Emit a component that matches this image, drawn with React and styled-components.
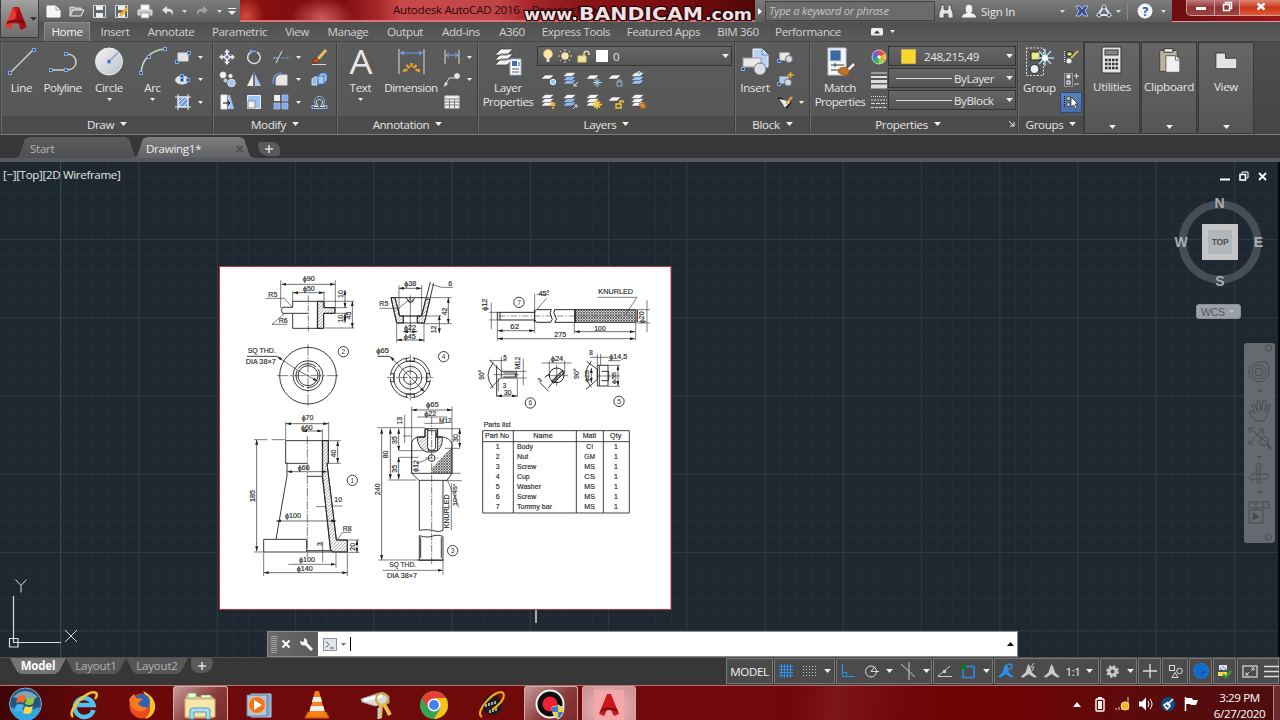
import React from "react";
import styled, { createGlobalStyle, css } from "styled-components";

const GlobalStyle = createGlobalStyle`
  * {
    box-sizing: border-box;
  }

  body {
    margin: 0;
    background: #000;
    overflow: hidden;
  }
`;

const Window = styled.div`
  width: 1280px;
  height: 720px;
  display: flex;
  flex-direction: column;
  overflow: hidden;
  font-family: "Open Sans", "Noto Sans", sans-serif;
  font-size: 11.6px;
  letter-spacing: -0.55px;
  color: #e6e6e6;
  background: #373737;
  white-space: nowrap;
`;

/* ---------- header ---------- */

const Header = styled.div`
  display: grid;
  grid-template-columns: 39px 1fr;
  grid-template-rows: 22px 19px;
  flex: none;
  background: #595959;
`;

const AppButton = styled.div`
  grid-row: 1 / 3;
  height: 38px;
  display: flex;
  align-items: center;
  padding-left: 3px;
  gap: 3px;
  border: 1px solid #3c3c3c;
  border-top: 0;
  background: linear-gradient(#a2a2a2, #858585 50%, #6f6f6f);
`;

const TitleBar = styled.div`
  display: flex;
  background: #7c0d10;
`;

const QuickAccess = styled.div`
  width: 201px;
  display: flex;
  align-items: center;
  padding-left: 4px;
  background: linear-gradient(#7b7b7b, #6a6a6a 60%, #5c5c5c);
`;

const Slot = styled.div`
  width: ${(p) => p.w || 22.7}px;
  height: ${(p) => (p.h ? p.h + "px" : "auto")};
  display: flex;
  align-items: center;
  justify-content: center;
  gap: ${(p) => p.gap || 0}px;
  flex: none;
`;

const Caption = styled.div`
  position: relative;
  width: 515px;
  padding-left: 153px;
  display: flex;
  gap: 12px;
  line-height: 20px;
  color: #2b0809;
  letter-spacing: -0.25px;
  border-bottom: 2px solid #d97373;
  background:
    radial-gradient(ellipse 18px 20px at 6px 16px, #d2493b, transparent),
    radial-gradient(ellipse 32px 20px at 82px 18px, #d05a5c, transparent),
    linear-gradient(90deg, #8a0f10, #7d0d0f 20%, #a8282b 27%, #c9494b 31%, #c04547 50%, #a8282b 56%, #8c1518 66%, #7a0c0f 85%, #4d0708);
`;

const Watermark = styled.svg`
  position: absolute;
  left: 281px;
  top: 0;
  overflow: visible;
  z-index: 3;
`;

const InfoCenter = styled.div`
  width: 417px;
  display: flex;
  align-items: center;
  background: linear-gradient(#7b7b7b, #6a6a6a 60%, #5c5c5c);
`;

const SearchBox = styled.div`
  width: 170px;
  height: 20px;
  padding-left: 3px;
  line-height: 17px;
  font-style: italic;
  font-size: 11.2px;
  letter-spacing: -0.3px;
  color: #c3c3c3;
  border: 1px solid #434343;
  background: #6b6b6b;
`;

const SignIn = styled.div`
  width: 75px;
  padding-left: 1px;
  letter-spacing: -0.3px;
`;

const Rule = styled.div`
  width: 1px;
  height: 17px;
  margin: 0 3px 0 5px;
  background: #8b8b8b;
`;

const WindowControls = styled.div`
  flex: 1;
  display: flex;
  padding-left: 14px;
  border-bottom: 1px solid #e09a9a;
  background: linear-gradient(90deg, #6b0d0f, #991a1c);
`;

const ControlButton = styled.div`
  width: ${(p) => p.w}px;
  height: 16px;
  display: flex;
  align-items: center;
  justify-content: center;
  padding-bottom: 2px;
  border: 1px solid #d39c9c;
  border-top: 0;
  border-left-width: ${(p) => (p.first ? 1 : 0)}px;
  border-radius: ${(p) => (p.first ? "0 0 0 5px" : 0)};
  background: ${(p) =>
    p.close
      ? "linear-gradient(#dd8570, #c9371c 50%, #e35a33)"
      : "linear-gradient(#c27c7d, #8e3436 50%, #9c4344)"};
`;

const TabRow = styled.div`
  display: flex;
  padding-left: 5px;
  background: linear-gradient(#505050, #5b5b5b);
`;

const RibbonTab = styled.div`
  width: ${(p) => p.w}px;
  height: 19px;
  line-height: 20px;
  text-align: center;
  letter-spacing: -0.4px;
  color: ${(p) => (p.active ? "#f2f2f2" : "#d2d2d2")};
  ${(p) =>
    p.active &&
    css`
      line-height: 18px;
      background: linear-gradient(#7a7a7a, #686868);
      border: 1px solid #8a8a8a;
      border-bottom: 0;
    `}
`;

/* ---------- ribbon ---------- */

const Ribbon = styled.div`
  display: flex;
  flex: none;
  height: 94px;
  padding-left: 1px;
  background: linear-gradient(#4e4e4e, #454545);
  border-top: 1px solid #474747;
  border-bottom: 1px solid #7d7d7d;
`;

const Panel = styled.div`
  width: ${(p) => p.w}px;
  display: flex;
  flex-direction: column;
  border-right: 1px solid #3f3f3f;
  border-left: 1px solid #6a6a6a;
  background: linear-gradient(#5c5c5c, #565656);
`;

const PanelBody = styled.div`
  height: 74px;
  display: flex;
  padding-top: 4px;
`;

const PanelTitle = styled.div`
  flex: 1;
  display: flex;
  align-items: center;
  justify-content: center;
  gap: 6px;
  padding-left: ${(p) => p.shift || 0}px;
  padding-bottom: 2px;
  letter-spacing: -0.35px;
  background: #4c4c4c;
`;

const Launcher = styled.div`
  margin-left: 62px;
  display: flex;
`;

const BigButton = styled.div`
  width: ${(p) => p.w}px;
  display: flex;
  flex-direction: column;
  align-items: center;
`;

const BigLabel = styled.div`
  height: 14px;
  line-height: 14px;
  margin-top: ${(p) => (p.first ? 5 : 0)}px;
  letter-spacing: ${(p) => (p.wide ? -0.55 : -0.3)}px;
`;

const ArrowGap = styled.div`
  height: 8px;
  display: flex;
  align-items: center;
`;

const IconGrid = styled.div`
  display: grid;
  grid-template-columns: ${(p) => p.cols};
  grid-auto-rows: 22.5px;
  align-content: start;
  align-items: center;
  justify-items: center;
`;

const Column = styled.div`
  display: flex;
  flex-direction: column;
  gap: ${(p) => p.gap || 0}px;
`;

const Combo = styled.div`
  width: ${(p) => p.w}px;
  height: 20px;
  display: flex;
  align-items: center;
  gap: ${(p) => p.gap || 0}px;
  padding: 0 2px 0 ${(p) => p.pad || 0}px;
  letter-spacing: -0.4px;
  border: 1px solid #343434;
  background: linear-gradient(#666, #555);

  > :last-child {
    margin-left: auto;
  }
`;

const Swatch = styled.div`
  width: ${(p) => p.size}px;
  height: ${(p) => p.size}px;
  border: 1px solid ${(p) => p.edge || p.color};
  background: ${(p) => p.color};
`;

const LineSample = styled.div`
  width: 56px;
  height: 1px;
  background: #ddd;
`;

const Toggled = styled.div`
  width: 22px;
  height: 21px;
  display: flex;
  align-items: center;
  justify-content: center;
  border: 1px solid #2d4a75;
  background: linear-gradient(#5a82bd, #486fa9);
`;

const CollapsedPanel = styled.div`
  width: 56px;
  margin-right: 1px;
  display: flex;
  flex-direction: column;
  align-items: center;
  padding-top: 2px;
  border: 1px solid #393939;
  background: linear-gradient(#666, #565656);

  > :last-child {
    margin-top: auto;
    margin-bottom: 4px;
  }
`;

/* ---------- document tabs ---------- */

const DocTabs = styled.div`
  height: 27px;
  flex: none;
  display: flex;
  align-items: flex-end;
  padding-left: 15px;
  border-bottom: 4px solid #565a60;
  background: #373737;
`;

const DocTab = styled.div`
  width: ${(p) => p.w}px;
  height: 21px;
  display: flex;
  align-items: center;
  padding-top: 2px;
  padding-left: ${(p) => p.pad}px;
  letter-spacing: -0.3px;
  color: ${(p) => (p.active ? "#eee" : "#b4b4b4")};
  background: ${(p) => (p.active ? "linear-gradient(#7d7d7d, #606266)" : "linear-gradient(#5c5c5c, #4e4f51)")};
  clip-path: polygon(0 100%, 4px 92%, 10px 10%, 14px 0, calc(100% - 14px) 0, calc(100% - 10px) 10%, calc(100% - 4px) 92%, 100% 100%);
  margin-right: ${(p) => p.overlap || 0}px;
`;

const CloseMark = styled.span`
  margin-left: 34px;
  font-size: 11px;
  font-weight: 700;
  color: #4c4c4c;
`;

const AddTab = styled.div`
  width: 22px;
  height: ${(p) => p.h || 14}px;
  margin: ${(p) => p.m || "0"};
  display: flex;
  align-items: center;
  justify-content: center;
  border-radius: ${(p) => p.r || "3px 8px 3px 10px"};
  background: #5a5a5a;
`;

/* ---------- model space ---------- */

const ModelSpace = styled.div`
  position: relative;
  height: 495px;
  flex: none;
  background: #1f2730;
`;

const Scene = styled.svg`
  display: block;
`;

const ViewportLabel = styled.div`
  position: absolute;
  left: 3px;
  top: 4px;
  line-height: 18px;
  letter-spacing: -0.35px;
  color: #e3e5e7;
`;

const ViewportControls = styled.div`
  position: absolute;
  right: 13px;
  top: 9px;
  display: flex;
  align-items: center;
  gap: 9px;
`;

const ViewCube = styled.svg`
  position: absolute;
  left: 1170px;
  top: 33px;
`;

const WcsMenu = styled.div`
  position: absolute;
  left: 1196px;
  top: 142px;
  width: 45px;
  height: 15px;
  display: flex;
  justify-content: space-between;
  align-items: center;
  padding: 0 6px 0 4px;
  font: 10.5px/14px "Liberation Sans", sans-serif;
  letter-spacing: -0.2px;
  color: #555a60;
  border-radius: 3px;
  border: 1px solid #8a9096;
  background: #9ba0a6;
`;

const NavBar = styled.div`
  position: absolute;
  left: 1244px;
  top: 181px;
  width: 31px;
  height: 200px;
  border-radius: 3px;
  background: #666a6e;
`;

const CommandLine = styled.div`
  position: absolute;
  left: 267px;
  top: 469px;
  width: 751px;
  height: 26px;
  display: flex;
  border: 1px solid #8b8b8b;
  background: #fff;
`;

const CommandTools = styled.div`
  width: 50px;
  display: flex;
  align-items: center;
  gap: 8px;
  padding-left: 3px;
  background: linear-gradient(90deg, #6a6a6a, #5a5a5a);

  > :first-child {
    margin-right: -4px;
  }
`;

const CommandInput = styled.div`
  flex: 1;
  display: flex;
  align-items: center;
  gap: 4px;
  padding: 0 3px 0 5px;

  > :last-child {
    margin-left: auto;
  }
`;

const Caret = styled.div`
  width: 1px;
  height: 14px;
  background: #000;
`;

/* ---------- status bar ---------- */

const StatusBar = styled.div`
  height: 28px;
  flex: none;
  display: flex;
  justify-content: space-between;
  border-top: 1px solid #515151;
  background: #373737;
`;

const LayoutTabs = styled.div`
  display: flex;
  padding-left: 10px;
`;

const LayoutTab = styled.div`
  width: ${(p) => p.w}px;
  height: 16px;
  line-height: 15px;
  text-align: center;
  letter-spacing: -0.2px;
  color: ${(p) => (p.active ? "#fff" : "#b2b2b2")};
  font-weight: ${(p) => (p.active ? 700 : 400)};
  font-size: 11.5px;
  background: ${(p) => (p.active ? "#757575" : "#565656")};
  clip-path: polygon(0 0, 100% 0, calc(100% - 7px) 85%, calc(100% - 11px) 100%, 11px 100%, 7px 85%);
`;

const StatusTools = styled.div`
  display: flex;
  height: 26px;
`;

const StatusCell = styled.div`
  width: ${(p) => p.w}px;
  display: flex;
  align-items: center;
  justify-content: ${(p) => (p.start ? "flex-start" : "center")};
  border: 1px solid #797979;
  margin-right: 1px;
  background: #4b4b4b;
  color: #f4f4f4;
  letter-spacing: -0.4px;
`;

/* ---------- taskbar ---------- */

const Taskbar = styled.div`
  flex: 1;
  display: flex;
  border-top: 1px solid #b57070;
  background:
    linear-gradient(100deg, transparent 62%, #7d1617 65%, transparent 71%),
    linear-gradient(90deg, #3d0506, #6b090a 8%, #720a0b 50%, #6d0404 80%, #5a0b0c 90%, #4c0d0e);
`;

const TaskButton = styled.div`
  width: 54.4px;
  margin: 0 2px;
  display: flex;
  align-items: center;
  justify-content: center;
  border: 1px solid transparent;
  border-bottom: 0;
  border-radius: 3px 3px 0 0;
  ${(p) =>
    p.open &&
    css`
      border-color: #d8a9a9;
      background: ${p.bright
        ? "radial-gradient(circle at 50% 60%, #ffd0d0, #dba0a0 60%, #c98d8d)"
        : "linear-gradient(135deg, #c99a9a, #8a3a3b 55%, #7b2829)"};
    `}
`;

const Tray = styled.div`
  margin-left: auto;
  display: flex;
  align-items: center;
`;

const Clock = styled.div`
  width: 67px;
  margin-left: 4px;
  padding-top: 4px;
  text-align: center;
  color: #fff;
  line-height: 16px;
  letter-spacing: -0.4px;
`;

const ShowDesktop = styled.div`
  width: 7px;
  height: 100%;
  border-left: 1px solid #b98080;
  background: #6e2a2b;
`;

/* ---------- icons ---------- */

const Svg = ({ w = 18, h = w, vb, children }) => (
  <svg width={w} height={h} viewBox={vb || `0 0 ${w} ${h}`} fill="none" stroke="#dcdcdc">
    {children}
  </svg>
);

const Down = ({ s = 6, c = "#f0f0f0" }) => (
  <svg width={s} height={s / 2 + 0.5} viewBox="0 0 6 3.5">
    <path d="M0 0h6l-3 3.5z" fill={c} />
  </svg>
);

const Grip = ({ x, y }) => (
  <rect x={x - 1.5} y={y - 1.5} width="3" height="3" fill="#3c4a66" stroke="#78a9f2" />
);

const sheet = (y, fill = "#f3f3f3") => <path d={`M5 ${y}h9l-4 4h-9z`} fill={fill} stroke="#444" strokeWidth=".5" />;

const AutodeskA = ({ w }) => (
  <svg width={w} height={w + 2} viewBox="0 0 24 26">
    <path d="M9.500 1h6l8 21-6 3-2-6q-4-2-7 0l-2 5-5-2z" fill="#c9191f" />
    <path d="M9.500 1L1 22l5 2 7-15z" fill="#e53a38" />
    <path d="M15.500 1l-3 9 3 8 2 7 6-3z" fill="#a50e14" />
    <path d="M3.500 16q9-4 18 0l1 3q-10-4-20 0z" fill="#7f0a10" />
  </svg>
);

const icons = {
  newFile: <Svg w={16} h={14}><path d="M1 2h9l4 4v7H1z" fill="#f5f5f5" stroke="#fff" /><path d="M10 2v4h4" stroke="#999" /></Svg>,
  open: <Svg w={16} h={14}><path d="M1 12V3h4l1 1h6v2" fill="#aaa" stroke="#ddd" /><path d="M1 12l3-6h11l-3 6z" fill="#777" stroke="#eee" /></Svg>,
  save: <Svg w={15} h={15}><path d="M1.500 1.500h12v12h-12z" fill="#5c6470" stroke="#d8d8d8" /><path d="M4 2h7v4H4zM4 9h7v4H4z" fill="#eee" stroke="none" /></Svg>,
  saveAs: <Svg w={16} h={15}><path d="M1.500 1.500h12v12h-12z" fill="#5c6470" stroke="#d8d8d8" /><path d="M4 2h7v4H4zM4 9h7v4H4z" fill="#eee" stroke="none" /><path d="M6 12l7-8" stroke="#f0b323" strokeWidth="3" /></Svg>,
  print: <Svg w={16} h={15}><path d="M4 1h8v5H4z" fill="#fff" /><path d="M1 6h14v5H1z" fill="#c8c8c8" /><path d="M4 9h8v5H4z" fill="#fff" stroke="#999" /></Svg>,
  undo: <Svg w={14} h={12}><path d="M6 1L1 5l5 4V6.500c4-.5 5 1 5.500 4 1.500-4 0-7-5.500-7z" fill="#e3e3e3" stroke="none" /></Svg>,
  redo: <Svg w={14} h={12}><path d="M8 1l5 4-5 4V6.500c-4-.5-5 1-5.500 4C1 6.500 2.500 3.500 8 3.500z" fill="#a0a0a0" stroke="none" /></Svg>,
  more: <Svg w={8} h={9}><path d="M0 1.500h8" stroke="#eee" /><path d="M0 4h8L4 8z" fill="#eee" stroke="none" /></Svg>,
  binoculars: <Svg w={16} h={15}><path d="M3 1h3v4l1 1h2l1-1V1h3v3l2 5v5h-5v-4H6v4H1V9l2-5z" fill="#e4e4e4" stroke="#444" strokeWidth=".8" /></Svg>,
  user: <Svg w={14} h={14}><ellipse cx="7" cy="5" rx="3.300" ry="4.300" fill="#f2f2f2" stroke="none" /><path d="M0 13.500c0-3 3-3.500 5-4.500h4c2 1 5 1.500 5 4.500z" fill="#f2f2f2" stroke="none" /></Svg>,
  exchange: <Svg w={14} h={12}><path d="M1 1h4l2 3 2-3h4l-3 5 3 5H9L7 8l-2 3H1l3-5z" fill="#35508c" stroke="#a9bde6" /></Svg>,
  a360: <Svg w={16} h={14}><path d="M8 2L2 11h12z" stroke="#dfe6f5" strokeWidth="2" /><circle cx="8" cy="3" r="2" fill="#456" /><circle cx="3" cy="11" r="2" fill="#456" /><circle cx="13" cy="11" r="2" fill="#456" /></Svg>,
  line: <Svg w={30}><path d="M3 27L27 3" stroke="#cfcfc9" strokeWidth="1.500" /><Grip x={3} y={27} /><Grip x={27} y={4} /></Svg>,
  polyline: <Svg w={30}><path d="M2 24h17c12 0 12-16 0-16h-2" stroke="#cfcfc9" strokeWidth="1.500" /><Grip x={3} y={24} /><Grip x={18} y={24} /><Grip x={18} y={8} /></Svg>,
  circle: <Svg w={30}><circle cx="15" cy="15.500" r="13.500" fill="url(#ball)" stroke="#eee" /><path d="M15 15.500l9-9" stroke="#3c66c9" /><Grip x={15} y={15.5} /></Svg>,
  arc: <Svg w={30}><path d="M3 27C4 14 12 4 27 3" stroke="#cfcfc9" strokeWidth="1.500" /><Grip x={3} y={27} /><Grip x={11} y={11} /><Grip x={27} y={3} /></Svg>,
  rect: <Svg w={16} h={13}><path d="M3 2h10v8H3z" fill="#e3e3e3" /><Grip x={2} y={11} /><Grip x={14} y={2} /></Svg>,
  ellipse: <Svg w={16} h={13}><ellipse cx="7" cy="7" rx="6.500" ry="4" fill="#e3e3e3" /><Grip x={7} y={7} /><Grip x={13} y={7} /><Grip x={7} y={3} /></Svg>,
  hatch: <Svg w={16}><path d="M3 3h10v10H3z" fill="#6f9be0" /><path d="M3 0v16M13 0v16M0 3h16M0 13h16M3 9l6-6M3 13L13 3M8 13l5-5" stroke="#e8eefa" /></Svg>,
  move: <Svg w={16}><path d="M8 0l3 3.500H9V7h3.500V5L16 8l-3.500 3V9H9v3.500h2L8 16l-3-3.500h2V9H3.500v2L0 8l3.500-3v2H7V3.500H5z" fill="#e8e8e8" stroke="none" /><rect x="6" y="6" width="4" height="4" fill="#4e79c4" stroke="#fff" /></Svg>,
  rotate: <Svg w={16}><path d="M6 2.500A6.200 6.200 0 1 0 11 3" strokeWidth="1.500" /><path d="M6 2.500a6 6 0 0 1 4 0" stroke="#6ea2f5" strokeWidth="1.500" /><path d="M4 0l4 2.500L4 5z" fill="#6ea2f5" stroke="none" /></Svg>,
  trim: <Svg w={18} h={14}><path d="M1 8h5" stroke="#9dbcf0" /><path d="M4 13L10 1" stroke="#e6e6e6" /><path d="M9 8h9" stroke="#6ea2f5" strokeDasharray="3 1" /></Svg>,
  erase: <Svg w={17}><path d="M15 1L7 10" stroke="#f0bd62" strokeWidth="3" /><path d="M2 14c0-4 3-5 5-4s1 4-5 4z" fill="#e0541a" stroke="#6b2a10" /><path d="M1 15.500h14" /></Svg>,
  copy: <Svg w={17}><circle cx="4" cy="4" r="3" fill="#f2f2f2" /><circle cx="11.500" cy="5" r="1.700" fill="#f2f2f2" /><circle cx="6.500" cy="9.500" r="1.500" fill="#9bc0f5" /><circle cx="12.500" cy="12" r="3.800" fill="#a7c6f3" /></Svg>,
  mirror: <Svg w={16}><path d="M7 2v12H1z" fill="#eee" stroke="none" /><path d="M9 2v12h6z" fill="#aacaf5" stroke="none" /><path d="M8 0v16" stroke="#888" /></Svg>,
  fillet: <Svg w={17}><path d="M4 14V9c0-3 2-5 5-5h6v10z" fill="#e6e6e6" /><path d="M1 13c0-8 3-11 9-11" stroke="#6ea2f5" strokeWidth="1.200" /></Svg>,
  explode: <Svg w={17}><path d="M1 8l3-2h4l-2 2v6H1z" fill="#8db7ee" stroke="#eaf2ff" strokeWidth=".8" /><path d="M7 5l3-3h6v7l-3 4H7zM7 5h6v7M13 5l3-3" fill="#a9caf5" stroke="#3d6cb0" strokeWidth=".9" /></Svg>,
  stretch: <Svg w={16}><path d="M2 1h6v14H2z" fill="#fff" /><path d="M9 1h2l4 14H9z" fill="#9dc2f4" stroke="none" /><path d="M4 9h7M8.500 6.500L11 9l-2.500 2.500" stroke="#000" /></Svg>,
  scale: <Svg w={16}><path d="M1.500 1.500h13v13h-13z" fill="#9fc3f5" stroke="#e8f0ff" /><path d="M2 7h7v7H2z" fill="#f3f3f3" stroke="#888" /></Svg>,
  array: <Svg w={16}><path d="M1 1h6v6H1z" fill="#eee" stroke="none" /><path d="M9 1h6v6H9zM1 9h6v6H1zM9 9h6v6H9z" fill="#7fa9ea" stroke="#b6d0f7" strokeWidth=".6" /></Svg>,
  offset: <Svg w={17}><path d="M1 14.500h15v-3h-4c3-4 1-9-3.500-9S2 7.500 5 11.500H1z" stroke="#8fb6f0" /><path d="M3 12.500h4.500C4.500 9 5 5.500 8.500 5.500S12.500 9 9.500 12.500H14" stroke="#e9e9e9" /></Svg>,
  text: <Svg w={30} h={30}><text x="3.500" y="28" fontFamily="Open Sans" fontSize="33" letterSpacing="0" fill="#e8e8e8" stroke="none" textLength="23" lengthAdjust="spacingAndGlyphs">A</text></Svg>,
  dimension: <Svg w={30}><path d="M3 3v25M28 3v25" /><path d="M4 7h23" stroke="#6b9bf2" /><path d="M4 7l4-2.500v5zM27 7l-4-2.500v5z" fill="#6b9bf2" stroke="none" /><path d="M7 25l4.500-1.500M10.500 19l3 3M15.500 17v4M20.500 19l-3 3M24 25l-4.500-1.500" stroke="#e9a233" strokeWidth="2.400" /></Svg>,
  linear: <Svg w={16} h={14}><path d="M1 0v14M15 0v14" /><path d="M2 5h12M5 2.500L2 5l3 2.500M11 2.500L14 5l-3 2.500" stroke="#7ba8f5" /></Svg>,
  leader: <Svg w={17} h={15}><path d="M1 14L5 6h6" /><circle cx="13" cy="4" r="2.500" fill="#e6e6e6" /><path d="M0 15l1-5 3 2z" fill="#e6e6e6" stroke="none" /></Svg>,
  table: <Svg w={16} h={14}><path d="M1 1h14v12H1z" fill="#f2f2f2" /><path d="M1 4h14M1 7h14M1 10h14M5.500 4v9M10.500 4v9" stroke="#7b7b7b" /></Svg>,
  layerProps: <Svg w={30}><path d="M8 13h12l-6 6H2zM8 8h12l-6 6H2zM8 3h12l-6 6H2z" fill="#f6f6f6" stroke="#444" strokeWidth=".8" /><path d="M17 13h11v16H17z" fill="#fff" stroke="#9cb0c8" /><path d="M19 15h5v5h-5z" fill="#3f6fae" stroke="none" /><path d="M19 23h7M19 26h7M26 16v4" stroke="#456" /></Svg>,
  bulb: <Svg w={10} h={15}><circle cx="5" cy="5" r="4.500" fill="#fbe7a0" stroke="#e9c65a" strokeWidth=".5" /><path d="M3.500 9h3v4h-3z" fill="#ddd" stroke="none" /></Svg>,
  sun: <Svg w={14}><path d="M7 0v14M0 7h14M2 2l10 10M12 2L2 12" stroke="#e5d9ae" strokeDasharray="2 1" /><circle cx="7" cy="7" r="3.500" fill="#f8e7ae" stroke="none" /></Svg>,
  unlock: <Svg w={14} h={13}><path d="M1 6h8v6H1z" fill="#f3e7a5" stroke="#e7ce6d" /><path d="M7 6V3.500C7 .5 12 .5 12 3.500V5" stroke="#e3d9a3" strokeWidth="1.500" /></Svg>,
  insert: <Svg w={30}><path d="M13 3h9l6 6v12H13z" fill="#b9d2f3" stroke="#eef4ff" /><path d="M22 3v6h6" stroke="#6d93c9" /><rect x="3" y="12" width="18" height="9" fill="#e9e9e9" stroke="#999" /><circle cx="20" cy="23" r="6" fill="#d8dde6" stroke="#777" /><Grip x={3} y={23} /></Svg>,
  block: <Svg w={17} h={15}><rect x="3" y="3" width="9" height="7" fill="#e6e6e6" /><circle cx="12" cy="9" r="3.500" fill="#d0d8e6" stroke="#777" /><Grip x={2} y={11} /></Svg>,
  blockNew: <Svg w={17} h={15}><rect x="3" y="5" width="8" height="6" fill="#a8c6f0" /><circle cx="11" cy="10.500" r="3.500" fill="#d0d8e6" stroke="#777" /><path d="M13.500 0v6M10.500 3h6" stroke="#f5b02a" strokeWidth="1.500" /><Grip x={2} y={12} /></Svg>,
  attr: <Svg w={17} h={15}><path d="M1 3l4 1 1 5 4 3 4-5" stroke="#222" strokeWidth="2" /><path d="M3 4l5 8 5-5" fill="#eee" stroke="#eee" /><path d="M9 9l6-7" stroke="#e0a94a" strokeWidth="2" /></Svg>,
  match: <Svg w={30}><path d="M3 2h18v27H3z" fill="#f7f7f7" stroke="#bcd" /><path d="M5 4h11v11H5z" fill="#3a6aa0" stroke="#c9def3" /><path d="M6 19h13M10 17v4M6 24h8" stroke="#333" /><path d="M29 18l-6 6" stroke="#eee" strokeWidth="2.500" /><path d="M15 22l5-1 5 4-2 4c-4 1-8-1-10-3z" fill="#c47024" stroke="#7a3f10" strokeWidth=".6" /></Svg>,
  lineWeight: <Svg w={16} h={18}><path d="M0 2h16" /><path d="M0 6h16" strokeWidth="2" /><path d="M0 10.500h16" strokeWidth="3" /><path d="M0 15.500h16" strokeWidth="4" /></Svg>,
  lineType: <Svg w={16} h={15}><path d="M0 1.500h16" strokeDasharray="1 1" /><path d="M0 5h16" strokeDasharray="2 1" /><path d="M0 8.500h16" strokeDasharray="4 1" /><path d="M0 12.500h16" strokeDasharray="3 1" /></Svg>,
  group: <Svg w={30}><path d="M1.500 2h17v27.500h-17z" strokeDasharray="2 1.500" /><rect x="6" y="6" width="9" height="8" fill="#f0ea8a" stroke="#222" /><circle cx="9.500" cy="23" r="4.500" fill="#eaf3f7" stroke="#222" /><path d="M20 3v17M11 12h18M14 5l12 13M26 5L14 18" stroke="#9fdcf8" strokeWidth="1.500" /><circle cx="20" cy="12" r="3" fill="#fff" stroke="none" /></Svg>,
  groupEdit: <Svg w={17} h={16}><path d="M1.500 2v12" strokeDasharray="1 1" /><rect x="4" y="3" width="5" height="4" fill="#f0ea8a" stroke="#222" /><circle cx="6" cy="12" r="2.500" fill="#eee" stroke="none" /><path d="M8 9l7-7" stroke="#d8b860" strokeWidth="2" /></Svg>,
  groupAdd: <Svg w={17} h={16}><path d="M1.500 1.500h8v13h-8z" strokeDasharray="1 1" /><rect x="4" y="3" width="3" height="3" fill="#fff" /><rect x="4" y="9" width="3" height="3" fill="#345a9c" stroke="#fff" /><path d="M11 4h5M13.500 1.500v5M11 12h5" /></Svg>,
  groupPick: <Svg w={17} h={16}><path d="M1.500 2v11" strokeDasharray="1 1" stroke="#111" /><rect x="4" y="3" width="3" height="3" fill="#f0ea8a" stroke="#222" strokeWidth=".5" /><rect x="4" y="9" width="3" height="3" fill="#ddd" stroke="#222" strokeWidth=".5" /><path d="M8 3v10l2.500-2 2 4 1.500-1-2-4h3z" fill="#fff" stroke="#222" strokeWidth=".7" /></Svg>,
  calculator: <Svg w={22} h={28}><rect x="1" y="1" width="19" height="26" fill="#e4e4e4" stroke="#333" /><rect x="4" y="4" width="13" height="5" fill="#888" stroke="#333" /><path d="M4 14h13M4 18h13M4 22h13" stroke="#333" strokeWidth="2.500" strokeDasharray="2.500 1" /></Svg>,
  clipboard: <Svg w={26} h={29}><rect x="2" y="3" width="20" height="24" rx="1" fill="#bcb3a0" stroke="#3a3a3a" /><path d="M7 1h10v4H7z" fill="#f5f5f5" stroke="#222" /><path d="M9 9h11l5 5v14H9z" fill="#f1f1f1" stroke="#555" /><path d="M20 9v5h5" fill="#fff" stroke="#555" /></Svg>,
  view: <Svg w={26} h={28}><path d="M1 6h11v6h13v12H1z" fill="#e4e4e4" stroke="#333" /></Svg>,
};

// row icons of the layers panel: stack height, tint and corner badge
const layerIcons = [
  [1, "#f3f3f3", <circle key="b" cx="13" cy="11" r="2.700" fill="#8fc6f5" stroke="#dff" />],
  [3, "#8fb7ef", <path key="b" d="M16 11l-4 4M12 12v3h3" />],
  [1, "#f3f3f3", <path key="b" d="M12 7v9M8 11.500h9M9 8.500l6 6M15 8.500l-6 6" stroke="#aee0ff" />],
  [1, "#f3f3f3", <path key="b" d="M10 11h5v4h-5zM11 11V9h3v2" stroke="#9fb9c4" />],
  [3, "#9cc4f6", <circle key="b" cx="9" cy="2" r="1.500" fill="#6ea2f5" />],
  [3, "#f3f3f3", <path key="b" d="M13 14v2M11.500 10.500h3v2h-3z" stroke="#f1b32e" fill="#f1b32e" strokeWidth="1.600" />],
  [3, "#8fb7ef", <path key="b" d="M11 16l4-4M12 12h3v3" />],
  [3, "#f3f3f3", <path key="b" d="M12 7v9M8 11.500h9M9 8.500l6 6M15 8.500l-6 6" stroke="#f6cf3e" strokeWidth="1.600" />],
  [1, "#f3f3f3", <path key="b" d="M9 11h5v4H9zM13 11V8h3v2" stroke="#f2c33b" strokeWidth="1.400" />],
  [3, "#f3f3f3", <path key="b" d="M9 11l5-1 2 4-4 2z" fill="#d9862f" stroke="#b5651a" />],
];

const LayerIcon = ({ spec: [n, fill, badge] }) => (
  <Svg w={17}>
    {n > 2 && sheet(9, fill)}
    {n > 1 && sheet(5.5, fill)}
    {n === 1 ? sheet(4) : sheet(1.5)}
    {badge}
  </Svg>
);

const ColorWheel = () => (
  <Svg w={16}>
    {["#e94f3b", "#f2b632", "#a9cf46", "#3fae5a", "#3b7fd4", "#8d55c2"].map((c, i) => (
      <path key={c} d="M8 8L8 1A7 7 0 0 1 14.060 4.500z" fill={c} stroke="none" transform={`rotate(${i * 60} 8 8)`} />
    ))}
    <circle cx="8" cy="8" r="1.800" fill="#f4f4f4" stroke="none" />
    <circle cx="8" cy="8" r="7" stroke="#eee" strokeWidth=".7" />
  </Svg>
);

const Person = ({ c, mark }) => (
  <Svg w={18}>
    <path d="M8.500 2l2 3.500 1.500 5 5 4.500-3 .5-5.500-3.500L3.500 15.500.5 15l5-4.500 1.500-5z" fill={c} stroke="none" />
    {mark === "ring" && <circle cx="12.500" cy="4.500" r="2.500" stroke={c} strokeWidth="1.300" />}
    {mark === "bolt" && <path d="M14 1l-3 4h3l-2 4" stroke={c} />}
  </Svg>
);

/* ---------- drawing sheet ---------- */

const Dim = ({ d }) => <path d={d} markerStart="url(#tip)" markerEnd="url(#tip)" strokeWidth="2" />;

const T = ({ x, y, r, s = 21, w, children }) => (
  <text
    transform={`translate(${x} ${y})${r ? ` rotate(${r})` : ""}`}
    fontSize={s}
    textLength={w}
    lengthAdjust="spacingAndGlyphs"
    fill="#2c2c2c"
    stroke="#2c2c2c"
    strokeWidth=".5"
  >
    {children}
  </text>
);

const Balloon = ({ x, y, n }) => (
  <>
    <circle cx={x} cy={y} r="15.500" />
    <text x={x} y={y + 7} fontSize="20" textAnchor="middle" fill="#333" stroke="none">{n}</text>
  </>
);

const Nut = () => (
  <>
    <T x={263} y={58} w={36}>ϕ90</T>
    <Dim d="M199 67H360" />
    <path d="M197 55v83M361 55v83M233 88v30M327 88v30" strokeWidth="1.800" />
    <T x={264} y={88} w={35}>ϕ50</T>
    <Dim d="M234 92H327" />
    <T x={160} y={106}>R5</T>
    <path d="M152 109h56l24 27" strokeWidth="1.800" />
    <path d="M233 136v-18h95v18l14 1h18v17h-34v45h-93v-45h-30l-4-9 3-9zM233 154h47M307 118v81" />
    <path d="M308 118h17v19h35v17h-34v45h-18z" fill="url(#hatchLines)" />
    <path d="M280 100v113" strokeDasharray="18 4 4 4" strokeWidth="1.800" />
    <path d="M208 155l-37 32h46" strokeWidth="1.800" />
    <T x={191} y={183}>R6</T>
    <T x={384} y={108} r={-90}>10</T>
    <T x={384} y={182} r={-90}>10</T>
    <T x={408} y={172} r={-90}>45</T>
    <Dim d="M390 84v53" />
    <Dim d="M390 154v28" />
    <Dim d="M412 118v80" />
    <path d="M330 118h88M362 137h34M362 154h34M330 198h88" strokeWidth="1.800" />
    <T x={98} y={273} w={84}>SQ THD.</T>
    <path d="M96 283h90" />
    <T x={92} y={305} w={90}>DIA 38×7</T>
    <Dim d="M186 283l64 43M250 326l58 32" />
    <circle cx="279" cy="341" r="85" />
    <circle cx="279" cy="341" r="45" />
    <circle cx="279" cy="341" r="36" strokeDasharray="60 8" />
    <circle cx="279" cy="341" r="30" />
    <path d="M279 247v190M186 341h186" strokeDasharray="34 5 6 5" strokeWidth="1.800" />
    <Balloon x={385} y={269} n="2" />
  </>
);

const Cup = () => (
  <>
    <T x={568} y={73} w={36}>ϕ38</T>
    <Dim d="M552 79H619" />
    <path d="M552 70v90M620 70v90" strokeWidth="1.800" />
    <path d="M528 107h112M528 107l17 76h83l28-120M540 107l14 55h66l26-102M565 162v20M607 162v20" />
    <path d="M528 107h12l14 55h11v21h-20zM632 112h13l-17 71h-21v-21h13z" fill="url(#hatchLines)" />
    <path d="M640 107h70M628 185h82M560 162h120" strokeWidth="1.800" />
    <path d="M572 107l14 14 14-14M578 112a8 8 0 0 0 18 0" />
    <path d="M493 139h58l37-30M650 68l30 8h34" strokeWidth="1.800" />
    <T x={493} y={131}>R5</T>
    <T x={700} y={73}>6</T>
    <T x={696} y={160} r={-90}>42</T>
    <Dim d="M700 107v78" />
    <T x={662} y={214} r={-90}>12</T>
    <Dim d="M673 160v54" />
    <T x={567} y={205} w={36}>ϕ22</T>
    <Dim d="M564 209h43" />
    <T x={566} y={231} w={36}>ϕ45</T>
    <Dim d="M545 234h82" />
    <path d="M545 185v56M627 185v56M586 100v110" strokeWidth="1.800" />
    <T x={484} y={272} w={38}>ϕ65</T>
    <path d="M488 283h37" />
    <Dim d="M525 283l104 107" />
    <circle cx="586" cy="347" r="60" strokeDasharray="84 10" strokeDashoffset="-6" />
    <circle cx="586" cy="347" r="50" />
    <circle cx="586" cy="347" r="34" />
    <circle cx="586" cy="347" r="20" />
    <path d="M586 277v140M516 347h140" strokeDasharray="24 4 6 4" strokeWidth="1.800" />
    <path d="M574 288v10h24v-10M574 406v-10h24v10M527 335h10v24h-10M645 335h-10v24h10" />
    <Balloon x={686} y={284} n="4" />
  </>
);

const Body = () => (
  <>
    <T x={260} y={61} w={35}>ϕ70</T>
    <Dim d="M213 71h127" />
    <T x={258} y={89} w={35}>ϕ60</T>
    <Dim d="M262 93h60" />
    <path d="M212 66v56M341 66v56M322 88v34" strokeWidth="1.800" />
    <path d="M212 122h128v68h-4l28 228M212 122v68h4v38l-33 190M212 190h65M277 229h46M322 122v108l25 220M146 418h129v36M364 420h33v36H146v-38M275 452h78" />
    <path d="M323 122h17v68h-4l28 230h33v36h-45l-6-6-23-220z" fill="url(#hatchLines)" />
    <path d="M277 108v364" strokeDasharray="26 4 5 4" strokeWidth="1.800" />
    <T x={248} y={211} w={36}>ϕ66</T>
    <Dim d="M217 215h118" />
    <T x={362} y={172} r={-90}>40</T>
    <Dim d="M368 123v66" />
    <path d="M341 122h36M341 190h36" strokeWidth="1.800" />
    <T x={119} y={306} r={-90} w={36}>185</T>
    <Dim d="M125 119v335" />
    <path d="M117 119h40M170 119h40M117 456h30" strokeWidth="1.800" />
    <T x={358} y={307}>10</T>
    <path d="M303 320h30M350 318h32" strokeWidth="1.800" />
    <T x={210} y={354} w={48}>ϕ100</T>
    <Dim d="M184 363h180" />
    <T x={383} y={392}>R8</T>
    <path d="M408 397h-25l-16 22" strokeWidth="1.800" />
    <T x={320} y={438} r={-90}>3</T>
    <path d="M323 425v62" strokeWidth="1.800" />
    <T x={420} y={452} r={-90}>20</T>
    <Dim d="M426 420v38" />
    <path d="M397 420h36M397 457h36M146 458v70M397 458v70M363 458v45" strokeWidth="1.800" />
    <T x={252} y={487} w={48}>ϕ100</T>
    <path d="M220 493h142" strokeWidth="1.800" markerEnd="url(#tip)" />
    <T x={245} y={514} w={48}>ϕ140</T>
    <Dim d="M146 518h251" />
    <Balloon x={412} y={241} n="1" />
  </>
);

const Screw = () => (
  <>
    <T x={633} y={22} w={38}>ϕ65</T>
    <Dim d="M590 30h121" />
    <path d="M590 20v200M711 20v200" strokeWidth="1.800" />
    <T x={628} y={48} w={36}>ϕ22</T>
    <path d="M607 51h90M628 70h60" strokeWidth="1.800" />
    <T x={672} y={68} w={38}>M12</T>
    <path d="M590 220v-92q6-18 26-18h14v-24h36v24h14q24 4 31 20v90zM590 220l22 21h84l15-21M613 241v150M684 241v150M613 391q30-5 50 3 12 2 21-3M613 407q26 8 44 0 12-4 27 2v72h-71zM617 412v62M679 412v62M608 480h78" />
    <path d="M606 112h24v-24h10v64h28v-64l-4 24h18q2 34-22 44h-26q-24-10-28-44z" fill="url(#hatchLines)" />
    <path d="M638 92v52q12 16 24 0V92z" fill="#fff" />
    <path d="M650 206l61-66v80h-61z" fill="url(#knurl)" stroke="none" />
    <circle cx="650" cy="174" r="10" />
    <path d="M650 50v442M630 174h40" strokeDasharray="22 4 5 4" strokeWidth="1.800" />
    <T x={562} y={74} r={-90}>13</T>
    <path d="M569 45v84" strokeWidth="1.800" />
    <T x={545} y={132} r={-90}>35</T>
    <Dim d="M551 86v66" />
    <T x={519} y={175} r={-90}>80</T>
    <Dim d="M526 86v152" />
    <T x={545} y={218} r={-90}>35</T>
    <Dim d="M551 172v66" />
    <T x={608} y={216} r={-86}>ϕ12</T>
    <path d="M606 190l36-14" strokeWidth="1.800" />
    <T x={494} y={286} r={-90} w={36}>240</T>
    <Dim d="M500 86v394" />
    <path d="M487 83h143M551 152h76M551 172h60M520 240h84M490 480h122M590 108h-26M666 86h70M690 145h46M711 220h26M690 242h50" strokeWidth="1.800" />
    <T x={728} y={126} r={-90}>30</T>
    <Dim d="M734 86v57" />
    <T x={702} y={385} r={-90} w={102}>KNURLED</T>
    <path d="M709 250v140M698 242l34 80" strokeWidth="1.800" />
    <T x={726} y={318} r={-90} s={18} w={68}>10×45°</T>
    <T x={523} y={502} w={80}>SQ THD.</T>
    <path d="M503 511h120M684 482v42" strokeWidth="1.800" />
    <path d="M623 511h60" strokeWidth="1.800" markerEnd="url(#tip)" />
    <T x={516} y={534} w={90}>DIA 38×7</T>
    <Balloon x={713} y={452} n="3" />
  </>
);

const Bar = () => (
  <>
    <T x={142} y={146} r={-90} w={36}>ϕ12</T>
    <path d="M154 122v80M148 151h24M148 174h24" strokeWidth="1.800" />
    <path d="M172 151h112v-8M172 174h112v8M172 151v23M180 151v23M290 143h44q-8 10 0 20 6 10-2 18h-42l-6-8v-24zM344 143h62v38h-62q10-10 2-19-8-9-2-19M592 143v38" strokeWidth="3" />
    <rect x="404" y="143" width="184" height="38" fill="url(#knurl)" />
    <path d="M176 162h410" strokeDasharray="20 5 5 5" strokeWidth="1.500" />
    <path d="M284 95v118M290 143l30-34M290 98h38" strokeWidth="1.800" />
    <T x={296} y={103} w={32}>45°</T>
    <Balloon x={237} y={121} n="7" />
    <T x={475} y={97} w={104}>KNURLED</T>
    <path d="M473 106h118l-36 54" strokeWidth="1.800" />
    <T x={611} y={184} r={-90} w={36}>ϕ20</T>
    <path d="M621 115v96M592 143h38M592 183h38" strokeWidth="1.800" />
    <T x={211} y={200} w={26}>62</T>
    <Dim d="M173 206h110" />
    <T x={463} y={206} w={34}>100</T>
    <Dim d="M404 209h181" />
    <T x={343} y={224} w={36}>275</T>
    <Dim d="M173 230h412" />
    <path d="M172 176v60M403 183v32M587 183v52" strokeWidth="1.800" />
  </>
);

const SmallParts = () => (
  <>
    <T x={132} y={353} r={-90} w={30}>90°</T>
    <path d="M160 302q-32 38 0 76M148 294l36 34v18l-34 34M170 310v94M184 328h46v20h-46M190 333h36v12h-36" />
    <path d="M160 338h76M230 328h30M230 348h30M184 328v-44M150 296h50" strokeWidth="1.800" />
    <T x={190} y={294} s={19}>5</T>
    <T x={240} y={322} r={-90} w={38}>M12</T>
    <path d="M250 290v80M175 348v40" strokeWidth="1.800" />
    <T x={188} y={378} s={19}>3</T>
    <T x={192} y={398} s={20}>30</T>
    <Dim d="M171 402h60" />
    <path d="M232 350v55" strokeWidth="1.800" />
    <Balloon x={271} y={423} n="6" />
    <T x={332} y={297} s={19} w={38}>ϕ24</T>
    <path d="M305 303h90M328 296v40M374 296v40M318 341h66M350 308v64" strokeWidth="1.800" />
    <circle cx="350" cy="340" r="22" strokeWidth="3" />
    <path d="M334 358l34-34 5 8-32 32z" fill="url(#knurl)" />
    <path d="M325 378l25-32M300 362l26 26M314 346l14-10" />
    <T x={300} y={362} r={-45} s={18}>3</T>
    <T x={448} y={280} s={19}>8</T>
    <T x={508} y={291} s={20} w={54}>ϕ14,5</T>
    <T x={418} y={351} r={-90} w={32}>90°</T>
    <path d="M454 298q-34 40 0 78M440 298l32 24v30l-34 30M472 310h32v62h-32zM478 310v62M484 328h22v28h-22" />
    <T x={447} y={360} r={-90} s={18} w={36}>ϕ25</T>
    <T x={528} y={366} r={-90} s={18} w={36}>ϕ35</T>
    <Dim d="M534 310v62" />
    <Dim d="M454 318v44" />
    <path d="M450 286h56M472 276v34M482 276v34M504 296h38M504 310h36M504 373h36M470 342h70" strokeWidth="1.800" />
    <Balloon x={537} y={418} n="5" />
  </>
);

const parts = [
  ["1", "Body", "CI", "1", 48],
  ["2", "Nut", "GM", "1", 34],
  ["3", "Screw", "MS", "1", 58],
  ["4", "Cup", "CS", "1", 38],
  ["5", "Washer", "MS", "1", 72],
  ["6", "Screw", "MS", "1", 58],
  ["7", "Tommy bar", "MS", "1", 105],
];

const PartsList = () => (
  <g>
    <T x={131} y={494} w={81}>Parts list</T>
    <path d="M128 506h440v247H128zM128 539h440M220 506v247M409 506v247M490 506v247" strokeWidth="2.600" />
    <T x={135} y={529} w={72}>Part No</T>
    <T x={280} y={529} w={58}>Name</T>
    <T x={428} y={529} w={40}>Matl</T>
    <T x={510} y={529} w={34}>Qty</T>
    {parts.map(([no, name, matl, qty, w], i) => {
      const y = 561 + i * 29.9;
      return (
        <g key={no}>
          <T x={167} y={y}>{no}</T>
          <T x={231} y={y} w={w}>{name}</T>
          <T x={matl === "CI" ? 439 : 433} y={y} w={matl === "CI" ? 20 : 32}>{matl}</T>
          <T x={522} y={y}>{qty}</T>
        </g>
      );
    })}
  </g>
);

const ModelScene = () => (
  <Scene width="1280" height="495" viewBox="0 162 1280 495">
    <defs>
      <pattern id="minor" width="15.650" height="15.650" patternUnits="userSpaceOnUse" x="60.300" y="239">
        <path d="M0 .5h15.650M.5 0v15.650" stroke="#242e37" fill="none" />
      </pattern>
      <pattern id="major" width="78.250" height="78.250" patternUnits="userSpaceOnUse" x="60.300" y="239">
        <path d="M0 .5h78.250M.5 0v78.250" stroke="#2e3943" fill="none" />
      </pattern>
      <pattern id="hatchLines" width="10" height="10" patternUnits="userSpaceOnUse">
        <path d="M-2 12L12-2" stroke="#555" strokeWidth="1.700" />
      </pattern>
      <pattern id="knurl" width="8" height="8" patternUnits="userSpaceOnUse">
        <path d="M0 0l8 8M8 0L0 8" stroke="#222" strokeWidth="2.100" />
      </pattern>
      <marker id="tip" viewBox="0 0 10 6" refX="10" refY="3" markerWidth="15" markerHeight="9" markerUnits="userSpaceOnUse" orient="auto-start-reverse">
        <path d="M0 0l10 3-10 3z" fill="#222" />
      </marker>
      <linearGradient id="ball" x1="0" y1="0" x2="1" y2="1">
        <stop offset="0" stopColor="#f4f4f4" />
        <stop offset="1" stopColor="#b9bfca" />
      </linearGradient>
    </defs>
    <rect y="162" width="1278" height="495" fill="#1f2830" />
    <rect y="162" width="1278" height="495" fill="url(#minor)" />
    <rect y="162" width="1278" height="495" fill="url(#major)" />
    <rect x="1278" y="162" width="2" height="495" fill="#050505" />
    <path d="M60.500 162v495" stroke="#24572b" />

    <rect x="219.500" y="266.500" width="451.500" height="343" fill="#fff" stroke="#c0343a" />
    <g fill="none" stroke="#262626" strokeWidth="2.700" fontFamily="Liberation Sans, sans-serif" letterSpacing="0">
      <g transform="translate(215 262) scale(.33333)">
        <Nut />
        <Cup />
      </g>
      <g transform="translate(215 400) scale(.33333)">
        <Body />
        <Screw />
      </g>
      <g transform="translate(440 262) scale(.33333)">
        <Bar />
        <SmallParts />
        <PartsList />
      </g>
    </g>

    <path d="M536 610v13" stroke="#d5dade" strokeWidth="1.500" />
    <g fill="none" stroke="#d8dbde">
      <path d="M13.500 596v46.500H61M9.500 638.500h8.500v8.500H9.500z" strokeWidth="1.200" />
      <path d="M15.500 579.500l5.500 6 5.500-6M21 585.500v7M65 630l12 12M77 630l-12 12" />
    </g>
  </Scene>
);

/* ---------- sections ---------- */

const tabs = [
  ["Home", 46], ["Insert", 50], ["Annotate", 62], ["Parametric", 75], ["View", 40], ["Manage", 62],
  ["Output", 52], ["Add-ins", 60], ["A360", 42], ["Express Tools", 86], ["Featured Apps", 89],
  ["BIM 360", 60], ["Performance", 80],
];

const TopHeader = () => (
  <Header>
    <AppButton>
      <AutodeskA w={23} />
      <Down c="#333" s={7} />
    </AppButton>
    <TitleBar>
      <QuickAccess>
        {["newFile", "open", "save", "saveAs", "print"].map((n) => (
          <Slot key={n}>{icons[n]}</Slot>
        ))}
        <Slot>{icons.undo}</Slot>
        <Slot w={11}><Down s={5} c="#ddd" /></Slot>
        <Slot w={24}>{icons.redo}</Slot>
        <Slot w={10}><Down s={5} c="#ddd" /></Slot>
        <Slot w={15}>{icons.more}</Slot>
      </QuickAccess>
      <Caption>
        <span>Autodesk AutoCAD 2016</span>
        <span>Drawing1.dwg</span>
        <Watermark width="235" height="26">
          <g fontFamily="DejaVu Sans, sans-serif" fontWeight="700" fill="#f3dfe0" stroke="#1d0506" strokeWidth="2.500" paintOrder="stroke" letterSpacing="0">
            <text x="3" y="20" fontSize="16" textLength="54" lengthAdjust="spacingAndGlyphs">www.</text>
            <text x="58" y="20" fontSize="18" textLength="124" lengthAdjust="spacingAndGlyphs">BANDICAM</text>
            <text x="184" y="20" fontSize="16" textLength="47" lengthAdjust="spacingAndGlyphs">.com</text>
          </g>
        </Watermark>
      </Caption>
      <InfoCenter>
        <Slot w={10}><svg width="4" height="7"><path d="M0 0l4 3.500-4 3.500z" fill="#fff" /></svg></Slot>
        <SearchBox>Type a keyword or phrase</SearchBox>
        <Slot w={22}>{icons.binoculars}</Slot>
        <Slot w={23}>{icons.user}</Slot>
        <SignIn>Sign In</SignIn>
        <Slot w={15}><Down s={5} c="#ddd" /></Slot>
        <Slot w={23}>{icons.exchange}</Slot>
        <Slot w={22}>{icons.a360}</Slot>
        <Slot w={7}><Down s={5} c="#ddd" /></Slot>
        <Rule />
        <Slot w={28}>
          <Svg w={16}>
            <circle cx="8" cy="8" r="7" fill="#f5f5f5" stroke="#fff" />
            <text x="8" y="12.500" fontSize="12" fontWeight="700" textAnchor="middle" fill="#2457a8" stroke="none">?</text>
          </Svg>
        </Slot>
        <Slot w={8}><Down s={5} c="#ddd" /></Slot>
      </InfoCenter>
      <WindowControls>
        <ControlButton w={29} first><Svg w={12} h={10}><rect x="1" y="5" width="10" height="3" fill="#fff" stroke="none" /></Svg></ControlButton>
        <ControlButton w={25}><Svg w={11}><path d="M3.500 3V1.500h6v6H8M1.500 3.500h6v6h-6z" stroke="#fff" strokeWidth="1.500" /></Svg></ControlButton>
        <ControlButton w={42} close><Svg w={10} h={10}><path d="M1.500 1.500l7 6M8.500 1.500l-7 6" stroke="#fff" strokeWidth="2.400" /></Svg></ControlButton>
      </WindowControls>
    </TitleBar>
    <TabRow>
      {tabs.map(([name, w], i) => (
        <RibbonTab key={name} w={w} active={i === 0 ? 1 : undefined}>{name}</RibbonTab>
      ))}
      <Slot w={69} h={19} gap={6}>
        <Svg w={14} h={8}><rect x="1" y="0" width="12" height="7.500" rx="1.500" fill="#eee" stroke="none" /><path d="M4 5.500h6L7 2.500z" fill="#333" stroke="none" /></Svg>
        <Down s={5} />
      </Slot>
    </TabRow>
  </Header>
);

const Big = ({ w, icon, label, second, arrow }) => (
  <BigButton w={w}>
    {icons[icon]}
    <BigLabel first wide={label.length > 7 ? 1 : undefined}>{label}</BigLabel>
    {second && <BigLabel wide={1}>{second}</BigLabel>}
    {arrow && <ArrowGap><Down s={5} /></ArrowGap>}
  </BigButton>
);

const Title = ({ children, shift, launcher }) => (
  <PanelTitle shift={shift}>
    {children}
    <Down s={7} />
    {launcher && (
      <Launcher>
        <Svg w={6}><path d="M0 0l4.500 4.500M5 1v4H1" stroke="#eee" /></Svg>
      </Launcher>
    )}
  </PanelTitle>
);

const RibbonPanels = () => (
  <Ribbon>
    <Panel w={212}>
      <PanelBody>
        <Big w={39} icon="line" label="Line" />
        <Big w={43} icon="polyline" label="Polyline" />
        <Big w={50} icon="circle" label="Circle" arrow />
        <Big w={37} icon="arc" label="Arc" arrow />
        <IconGrid cols="24px 10px">
          {icons.rect}<Down s={5} />
          {icons.ellipse}<Down s={5} />
          {icons.hatch}<Down s={5} />
        </IconGrid>
      </PanelBody>
      <Title>Draw</Title>
    </Panel>
    <Panel w={124}>
      <PanelBody>
        <IconGrid cols="26px 27px 27px 8px 34px">
          {icons.move}{icons.rotate}{icons.trim}<Down s={5} />{icons.erase}
          {icons.copy}{icons.mirror}{icons.fillet}<Down s={5} />{icons.explode}
          {icons.stretch}{icons.scale}{icons.array}<Down s={5} />{icons.offset}
        </IconGrid>
      </PanelBody>
      <Title>Modify</Title>
    </Panel>
    <Panel w={141}>
      <PanelBody>
        <Big w={45} icon="text" label="Text" arrow />
        <Big w={56} icon="dimension" label="Dimension" />
        <IconGrid cols="26px 9px">
          {icons.linear}<Down s={5} />
          {icons.leader}<Down s={5} />
          {icons.table}
        </IconGrid>
      </PanelBody>
      <Title>Annotation</Title>
    </Panel>
    <Panel w={257}>
      <PanelBody>
        <Big w={58} icon="layerProps" label="Layer" second="Properties" />
        <Column gap={2}>
          <Combo w={195} pad={5} gap={5}>
            {icons.bulb}
            {icons.sun}
            {icons.unlock}
            <Swatch size={12} color="#fff" />
            <span>0</span>
            <Down s={7} />
          </Combo>
          <IconGrid cols="repeat(5, 22.5px)">
            {layerIcons.map((spec, i) => <LayerIcon key={i} spec={spec} />)}
          </IconGrid>
        </Column>
      </PanelBody>
      <Title>Layers</Title>
    </Panel>
    <Panel w={75}>
      <PanelBody>
        <Big w={38} icon="insert" label="Insert" />
        <IconGrid cols="23px 8px">
          {icons.block}<span />
          {icons.blockNew}<span />
          {icons.attr}<Down s={5} />
        </IconGrid>
      </PanelBody>
      <Title>Block</Title>
    </Panel>
    <Panel w={208}>
      <PanelBody>
        <Big w={58} icon="match" label="Match" second="Properties" />
        <IconGrid cols="19px">
          <ColorWheel />
          {icons.lineWeight}
          {icons.lineType}
        </IconGrid>
        <Column gap={2}>
          <Combo w={128} pad={12} gap={8}>
            <Swatch size={15} color="#f8d731" edge="#c9b04a" />
            <span>248,215,49</span>
            <Down s={7} />
          </Combo>
          <Combo w={128} pad={7} gap={2}>
            <LineSample /><span>ByLayer</span><Down s={7} />
          </Combo>
          <Combo w={128} pad={7} gap={2}>
            <LineSample /><span>ByBlock</span><Down s={7} />
          </Combo>
        </Column>
      </PanelBody>
      <Title shift={62} launcher>Properties</Title>
    </Panel>
    <Panel w={66}>
      <PanelBody>
        <Big w={41} icon="group" label="Group" />
        <IconGrid cols="22px">
          {icons.groupEdit}
          {icons.groupAdd}
          <Toggled>{icons.groupPick}</Toggled>
        </IconGrid>
      </PanelBody>
      <Title>Groups</Title>
    </Panel>
    {[["calculator", "Utilities"], ["clipboard", "Clipboard"], ["view", "View"]].map(([icon, label]) => (
      <CollapsedPanel key={label}>
        <Slot h={30}>{icons[icon]}</Slot>
        <BigLabel first>{label}</BigLabel>
        <Down s={7} />
      </CollapsedPanel>
    ))}
  </Ribbon>
);

const Compass = () => (
  <ViewCube width="100" height="96" viewBox="1170 195 100 96">
    <circle cx="1220" cy="242" r="37.500" fill="none" stroke="#454e57" strokeWidth="8" />
    <rect x="1202" y="224" width="36" height="36" fill="#c3c5c7" />
    <rect x="1208" y="230" width="24" height="24" fill="#b3b6b8" />
    <text x="1220" y="245" fontFamily="Liberation Sans" fontSize="8.500" letterSpacing="-.2" fontWeight="700" textAnchor="middle" fill="#4b4f53">TOP</text>
    <g fontFamily="Liberation Sans" fontSize="14" letterSpacing="0" fontWeight="700" fill="#a9aeb3" textAnchor="middle">
      <text x="1219.500" y="208">N</text>
      <text x="1220" y="286">S</text>
      <text x="1181" y="247">W</text>
      <text x="1258.500" y="247">E</text>
    </g>
  </ViewCube>
);

const Navigation = () => (
  <NavBar>
    <svg width="31" height="200" fill="none" stroke="#484c50">
      <circle cx="24.500" cy="5" r="3" />
      <circle cx="24.500" cy="194" r="3" />
      <path d="M5 29a10 10 0 0 1 10-10h7l3 4v6a10 10 0 0 1-20 0z" />
      <circle cx="15" cy="29" r="7" />
      <circle cx="15" cy="29" r="4" />
      <path d="M13 47h5l-2.500 2.500zM13 113h5l-2.500 2.500zM13 148h5l-2.500 2.500z" fill="#484c50" stroke="none" />
      <path d="M11 78l-6-9q1-3 4 0l2 2-3-9q1-3 3 0l3 7-1-11q2-2 3 0l1 10 2-10q2-2 3 0l-1 11 3-7q2-2 2 1l-4 12-2 3z" />
      <path d="M5 85l20 16M5 101l14-15M5 85l1 5M5 85h5M19 86h-5M19 86v5M5 101v-4M5 101h4" />
      <circle cx="20" cy="98" r="4.500" />
      <path d="M23 101l4 5" strokeWidth="2" />
      <path d="M15 120l3 4h-2v16h-3v-16h-2zM8 131l-3 4 3 3v-2h13q4-1 4-3t-4-2H8z" />
      <path d="M5 159h20v6H5zM12 159v6M19 159v6M5 167h14v13H5z" />
      <path d="M9 170v7l6-3.500z" fill="#484c50" />
    </svg>
  </NavBar>
);

const CommandBar = () => (
  <CommandLine>
    <CommandTools>
      <Svg w={6} h={17}><path d="M1 0v17M3 0v17M5 0v17" strokeDasharray="1 1" /></Svg>
      <Svg w={10}><path d="M1.500 1.500l7 7M8.500 1.500l-7 7" stroke="#fff" strokeWidth="2" /></Svg>
      <Svg w={15}><path d="M6 6l7 7" stroke="#f2f2f2" strokeWidth="3" /><path d="M1 4a4 4 0 0 0 6 4 4 4 0 0 0 0-6L5 1v3L4 5z" fill="#f2f2f2" stroke="none" /></Svg>
    </CommandTools>
    <CommandInput>
      <Svg w={14} h={13}><rect x=".5" y=".5" width="13" height="12" fill="#e4e8ee" stroke="#8a93a0" /><path d="M3 3.500l3 3-3 3M7 10h4" stroke="#47525f" /></Svg>
      <Down s={5} c="#777" />
      <Caret />
      <svg width="7" height="4"><path d="M0 4h7L3.500 0z" fill="#111" /></svg>
    </CommandInput>
  </CommandLine>
);

const blue = "#2e8eea";
const grey = "#c9c9c9";

const Status = () => (
  <StatusBar>
    <LayoutTabs>
      <LayoutTab w={56} active>Model</LayoutTab>
      <LayoutTab w={60}>Layout1</LayoutTab>
      <LayoutTab w={62}>Layout2</LayoutTab>
      <AddTab m="0 0 0 3px" h={15} r="2px 4px 10px 8px"><Svg w={8}><path d="M4 0v8M0 4h8" strokeWidth="1.600" /></Svg></AddTab>
    </LayoutTabs>
    <StatusTools>
      <StatusCell w={47}>MODEL</StatusCell>
      <StatusCell w={61} start>
        <Slot><Svg w={14}><path d="M2.500 0v14M5.500 0v14M8.500 0v14M11.500 0v14M0 2.500h14M0 5.500h14M0 8.500h14M0 11.500h14" stroke={blue} /></Svg></Slot>
        <Slot><Svg w={13}><path d="M0 1.500h13M0 4.500h13M0 7.500h13M0 10.500h13" stroke={grey} strokeDasharray="1 2" /></Svg></Slot>
        <Slot w={14}><Down s={7} /></Slot>
      </StatusCell>
      <StatusCell w={96} start>
        <Slot><Svg w={14}><path d="M1.500 0v12.500H14M1.500 8.500h4v4" stroke={blue} strokeWidth="1.200" /></Svg></Slot>
        <Slot><Svg w={15}><circle cx="7" cy="7.500" r="5.500" /><path d="M7 7.500h8M7 7.500l4-5" /></Svg></Slot>
        <Slot w={14.5}><Down s={7} /></Slot>
        <Slot><Svg w={18}><path d="M2 2l14 13M10 0v18" stroke={grey} /></Svg></Slot>
        <Slot w={13}><Down s={7} /></Slot>
      </StatusCell>
      <StatusCell w={60} start>
        <Slot><Svg w={16} h={14}><path d="M1 12.500h14M1 12L13 2" stroke={grey} /><rect x="6" y="6" width="3" height="3" fill={grey} stroke="none" /></Svg></Slot>
        <Slot><Svg w={15}><rect x="2" y="2.500" width="11" height="11" stroke={blue} strokeWidth="1.500" /><rect x="0" y=".5" width="5" height="5" fill="#0d7a1f" stroke="none" /></Svg></Slot>
        <Slot w={14}><Down s={7} /></Slot>
      </StatusCell>
      <StatusCell w={105} start>
        <Slot><Person c={blue} mark="ring" /></Slot>
        <Slot><Person c={grey} mark="bolt" /></Slot>
        <Slot><Person c={grey} /></Slot>
        <Slot w={20}>1:1</Slot>
        <Slot w={12}><Down s={7} /></Slot>
      </StatusCell>
      <StatusCell w={37} start>
        <Slot>
          <Svg w={13}><circle cx="6.500" cy="6.500" r="3.500" stroke={grey} strokeWidth="3" /><circle cx="6.500" cy="6.500" r="5.400" stroke={grey} strokeWidth="2" strokeDasharray="2.200 2.040" /></Svg>
        </Slot>
        <Slot w={13}><Down s={7} /></Slot>
      </StatusCell>
      <StatusCell w={23}><Svg w={14}><path d="M7 0v14M0 7h14" strokeWidth="1.400" /></Svg></StatusCell>
      <StatusCell w={26}><Svg w={15}><rect x="1.500" y="1.500" width="5" height="5" /><circle cx="11.500" cy="7" r="2.800" /><path d="M4 13.500h6l-3-5z" /></Svg></StatusCell>
      <StatusCell w={23}><Svg w={16}><circle cx="8" cy="8" r="7.500" fill="#1269c9" stroke="#1c79de" /><path d="M8 11l4-3" stroke="#0a3c7c" /></Svg></StatusCell>
      <StatusCell w={23}><Svg w={15}><path d="M2 1h8v5H2z" fill="#dce6f2" stroke="none" /><path d="M5 2l6 5M3 4l6 5" stroke="#4b7fc4" /><path d="M1 8h9v4H1z" fill="#f0dd54" stroke="none" /><path d="M6 10l3 3 5-6" stroke="#3f9f2c" strokeWidth="2" /></Svg></StatusCell>
      <StatusCell w={42} start>
        <Slot w={23}><Svg w={16} h={13}><rect x="1" y="1" width="14" height="11" strokeWidth="1.200" /><path d="M9 6l3-3M9.500 3H12v2.500M7 7l-3 3M4 7.500V10h2.500" /></Svg></Slot>
        <Slot w={20}><Svg w={15} h={13}><path d="M0 1.500h15M0 6.500h15M0 11.500h15" strokeWidth="1.400" /></Svg></Slot>
      </StatusCell>
    </StatusTools>
  </StatusBar>
);

const StartOrb = () => (
  <Svg w={35} h={33}>
    <circle cx="17.500" cy="17" r="16" fill="#22557f" stroke="#8faabd" />
    <path d="M3 20a14.500 14 0 0 0 29 0q-14 6-29 0z" fill="#2fa6dd" stroke="none" />
    <path d="M5 10q12-12 25 0-12 5-25 0z" fill="#7da3bd" stroke="none" />
    <path d="M10 9q4-2 8 0l-2 7q-4-2-8 0z" fill="#ef6a32" stroke="none" />
    <path d="M19 10q4 2 8 0l-2 7q-4 2-8 0z" fill="#8ccb45" stroke="none" />
    <path d="M8 18q4-2 8 0l-2 7q-4-2-8 0z" fill="#4ab2ee" stroke="none" />
    <path d="M17 19q4 2 8 0l-2 7q-4 2-8 0z" fill="#fbd447" stroke="none" />
  </Svg>
);

const taskIcons = [
  <Svg w={30}>
    <path d="M24.500 20A9.500 9.500 0 1 1 24.500 15H8" stroke="#4fc3f0" strokeWidth="4.500" />
    <path d="M4 27C-3 21 19-2 27 3q2 2-1 6" stroke="#f4c530" strokeWidth="2.500" />
  </Svg>,
  <Svg w={30}>
    <circle cx="15" cy="16" r="12.500" fill="#e8491d" stroke="none" />
    <path d="M16 1q14 7 12 18-2 8-10 10 8-8 4-17z" fill="#ffc22c" stroke="none" />
    <circle cx="15" cy="12" r="8" fill="#2d62b8" stroke="none" />
    <path d="M2 10q2-4 5-6l2 4 7 1-5 4q2 5 9 4-3 6-10 4-6-2-8-11z" fill="#f87a1c" stroke="none" />
  </Svg>,
  <Svg w={34} h={30}>
    <path d="M3 5h10l2 2h15v21H3z" fill="#e8d48a" stroke="#b69d4e" />
    <path d="M5 3h8v5H5zM18 5h10v3H18z" fill="#eef4e2" stroke="#5aa05a" strokeWidth=".6" />
    <path d="M2 9h30v18H2z" fill="#f5e6ab" stroke="#c9b26a" />
    <path d="M7 29v-8q0-3 3-3h14q3 0 3 3v8h-4v-7H11v7z" fill="#a9dbf3" stroke="#4e9ac4" />
  </Svg>,
  <Svg w={28}>
    <path d="M6 3h20v23H6z" fill="#7fa6c6" stroke="#bdd3e4" />
    <path d="M2 4h20v21H2z" fill="#a9c8df" stroke="#5f86a7" />
    <circle cx="12" cy="14" r="8.500" fill="#f0741d" stroke="#fbc08e" />
    <path d="M9 9l8 5-8 5z" fill="#fff" stroke="none" />
  </Svg>,
  <Svg w={28} h={30}>
    <path d="M2 28l3-6h18l3 6z" fill="#f07b12" stroke="#c95c05" />
    <path d="M12 1h4l6 23q-8 4-16 0z" fill="#f5811a" stroke="none" />
    <path d="M10.300 7h7.400l1.500 5H9zM7.800 16h12.600l1.300 5H6.500z" fill="#f0f0f0" stroke="none" />
  </Svg>,
  <Svg w={32} h={30}>
    <path d="M1 9l18-6 10 3v7L15 16 2 12z" fill="#dadada" stroke="#9c9c9c" />
    <path d="M4 10l18-4" stroke="#fff" strokeWidth="3" />
    <circle cx="22" cy="9" r="6" stroke="#cda43d" strokeWidth="2" />
    <path d="M21 14l-1 14M24 14l6 11" stroke="#e2bd54" strokeWidth="4" />
    <path d="M19 18v11" stroke="#c9c9c9" strokeWidth="3" />
  </Svg>,
  <Svg w={30}>
    <circle cx="15" cy="15" r="14" fill="#34a353" stroke="none" />
    <path d="M15 8h12.100A14 14 0 0 1 15 29l6-10z" fill="#fbc116" stroke="none" />
    <path d="M15 15L9 18.500 2.900 8A14 14 0 0 1 27.100 8H15z" fill="#e34133" stroke="none" />
    <circle cx="15" cy="15" r="6.500" fill="#fff" stroke="none" />
    <circle cx="15" cy="15" r="5" fill="#4383f0" stroke="none" />
  </Svg>,
  <Svg w={30}>
    <circle cx="15" cy="15" r="10" fill="#1e1c1c" stroke="none" />
    <path d="M9 14v3M12 13v3M15 12v3M18 11v3M13 20v3M16 19v3M19 18v3" stroke="#d5d5d5" strokeWidth="1.500" />
    <path d="M5 27C-4 22 20-3 26 3q4 6-11 17" stroke="#e9a81d" strokeWidth="2.200" />
  </Svg>,
  <Svg w={31}>
    <circle cx="15" cy="15" r="13.500" fill="#0d0d0d" stroke="#f2f2f2" strokeWidth="2" />
    <circle cx="15" cy="15" r="7.500" fill="#ef2330" stroke="none" />
    <path d="M17 18q5 0 6-2 2 2 6 2 0 9-6 12-6-3-6-12z" fill="#f2cf3b" stroke="#ddd" />
    <path d="M23 17v6h-6q0-3 0-5 4 0 6-1zM23 23h5q-1 4-5 6z" fill="#2f7fd0" stroke="none" />
  </Svg>,
  <Svg w={30}>
    <rect width="30" height="30" fill="#f3a9a9" stroke="none" />
    <path d="M13 4h4l8 20-5 2-3-6q-2-1-4 0l-3 6-5-2z" fill="#c8171d" stroke="none" />
    <path d="M7.500 19q8-3 15.500 0l1 3q-9-4-17.500 0z" fill="#84090e" stroke="none" />
  </Svg>,
];

const trayIcons = [
  <Svg w={8} h={5}><path d="M0 5h8L4 0z" fill="#fff" stroke="none" /></Svg>,
  <Svg w={10} h={15}><path d="M3 0h4v2H3z" fill="#fff" stroke="none" /><rect x="1" y="2" width="8" height="12" rx="1" stroke="#fff" strokeWidth="1.400" /><rect x="3" y="4" width="4" height="8" fill="#eee" stroke="none" /></Svg>,
  <Svg w={16} h={14}><path d="M1 13v-2M4 13v-3M7 13V7M10 13V4M13 13V0" stroke="#b98f8f" strokeWidth="1.500" /><circle cx="10" cy="9" r="4" fill="#f7b522" stroke="#ffdf7a" /></Svg>,
  <Svg w={15} h={14}><path d="M1 4.500h3l4-4v13l-4-4H1z" fill="#fff" stroke="none" /><path d="M10 4q2 3 0 6M12 2q4 5 0 10" stroke="#fff" /></Svg>,
  <Svg w={14}><circle cx="7" cy="7" r="7" fill="#124a86" stroke="none" /><path d="M12 2L6 8M6 5l3 3M3 8l3 4 3-3-3-3z" stroke="#fff" strokeWidth="1.600" /></Svg>,
  <Svg w={14} h={14}><path d="M1.500 0v14" stroke="#fff" strokeWidth="1.500" /><path d="M2 1h6l1 2h5l-2 5H7L6 7H2z" fill="#fff" stroke="none" /></Svg>,
];

const App = () => {
  return (
    <Window>
      <GlobalStyle />
      <TopHeader />
      <RibbonPanels />
      <DocTabs>
        <DocTab w={124} pad={15} overlap={-6}>Start</DocTab>
        <DocTab w={121} pad={13} active>
          Drawing1*
          <CloseMark>✕</CloseMark>
        </DocTab>
        <AddTab m="0 0 2px 4px"><Svg w={8}><path d="M4 0v8M0 4h8" strokeWidth="1.600" /></Svg></AddTab>
      </DocTabs>
      <ModelSpace>
        <ModelScene />
        <ViewportLabel>[−][Top][2D Wireframe]</ViewportLabel>
        <ViewportControls>
          <Svg w={10}><path d="M0 8.500h10" stroke="#fff" strokeWidth="2" /></Svg>
          <Svg w={10}><path d="M3 2.500V1h6v6H7.500" stroke="#fff" /><rect x="1" y="3.500" width="5.500" height="5.500" stroke="#fff" strokeWidth="1.600" /></Svg>
          <Svg w={9}><path d="M1 1l7 7M8 1L1 8" stroke="#fff" strokeWidth="1.800" /></Svg>
        </ViewportControls>
        <Compass />
        <WcsMenu>WCS<Down s={5} c="#b9bdc2" /></WcsMenu>
        <Navigation />
        <CommandBar />
      </ModelSpace>
      <Status />
      <Taskbar>
        <Slot w={50} h={34}><StartOrb /></Slot>
        <Slot w={4.5} />
        {taskIcons.map((icon, i) => (
          <TaskButton key={i} open={i === 2 || i > 7 ? 1 : undefined} bright={i === 9 ? 1 : undefined}>
            {icon}
          </TaskButton>
        ))}
        <Tray>
          {trayIcons.map((icon, i) => (
            <Slot key={i}>{icon}</Slot>
          ))}
          <Clock>
            <div>3:29 PM</div>
            <div>6/27/2020</div>
          </Clock>
          <ShowDesktop />
        </Tray>
      </Taskbar>
    </Window>
  );
};

export default App;
